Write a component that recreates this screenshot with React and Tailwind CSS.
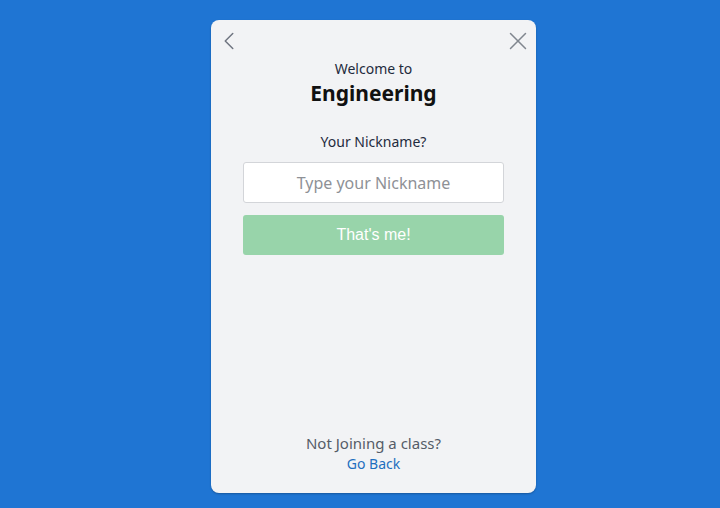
import { ChevronLeft, X } from 'lucide-react';

export default function App() {
  return (
    <div className="w-[720px] h-[508px] bg-[#1f75d3] flex pl-[211px] pt-5 font-['Noto_Sans',sans-serif]">
      <div className="w-[325px] h-[473px] bg-[#f2f3f5] rounded-lg shadow-[0_1px_2px_rgba(0,0,0,0.25)] flex flex-col px-8 pt-[13px] pb-[19px]">
        <div className="flex justify-between -mx-[29px] h-[16px] items-center">
          <ChevronLeft className="w-[30px] h-[30px] text-[#6f7580] shrink-0" strokeWidth={1.2} />
          <X className="w-[30px] h-[30px] text-[#80868f] shrink-0" strokeWidth={1.2} />
        </div>
        <p className="mt-[10px] text-center text-[14px] leading-[20px] text-[#1f2b3d]">Welcome to</p>
        <h1 className="text-center text-[21px] leading-[28px] font-bold text-[#111]">Engineering</h1>
        <p className="mt-[25px] text-center text-[14px] leading-[20px] text-[#1f2b3d]">Your Nickname?</p>
        <input
          type="text"
          placeholder="Type your Nickname"
          className="mt-[10px] h-[41px] w-full bg-white border border-[#d3d5d9] rounded-[3px] text-center text-[16px] text-[#333] placeholder:text-[#8e9196] outline-none"
        />
        <button className="mt-[12px] h-[40px] w-full rounded-[3px] bg-[#98d4aa] text-white text-[16px] font-['Liberation_Sans',Arial,sans-serif]">
          That's me!
        </button>
        <div className="mt-auto flex flex-col items-center">
          <p className="text-[15px] leading-[20px] text-[#555c68]">Not Joining a class?</p>
          <a className="mt-[1px] text-[14px] leading-[20px] text-[#1f6fbf] cursor-pointer">Go Back</a>
        </div>
      </div>
    </div>
  );
}
